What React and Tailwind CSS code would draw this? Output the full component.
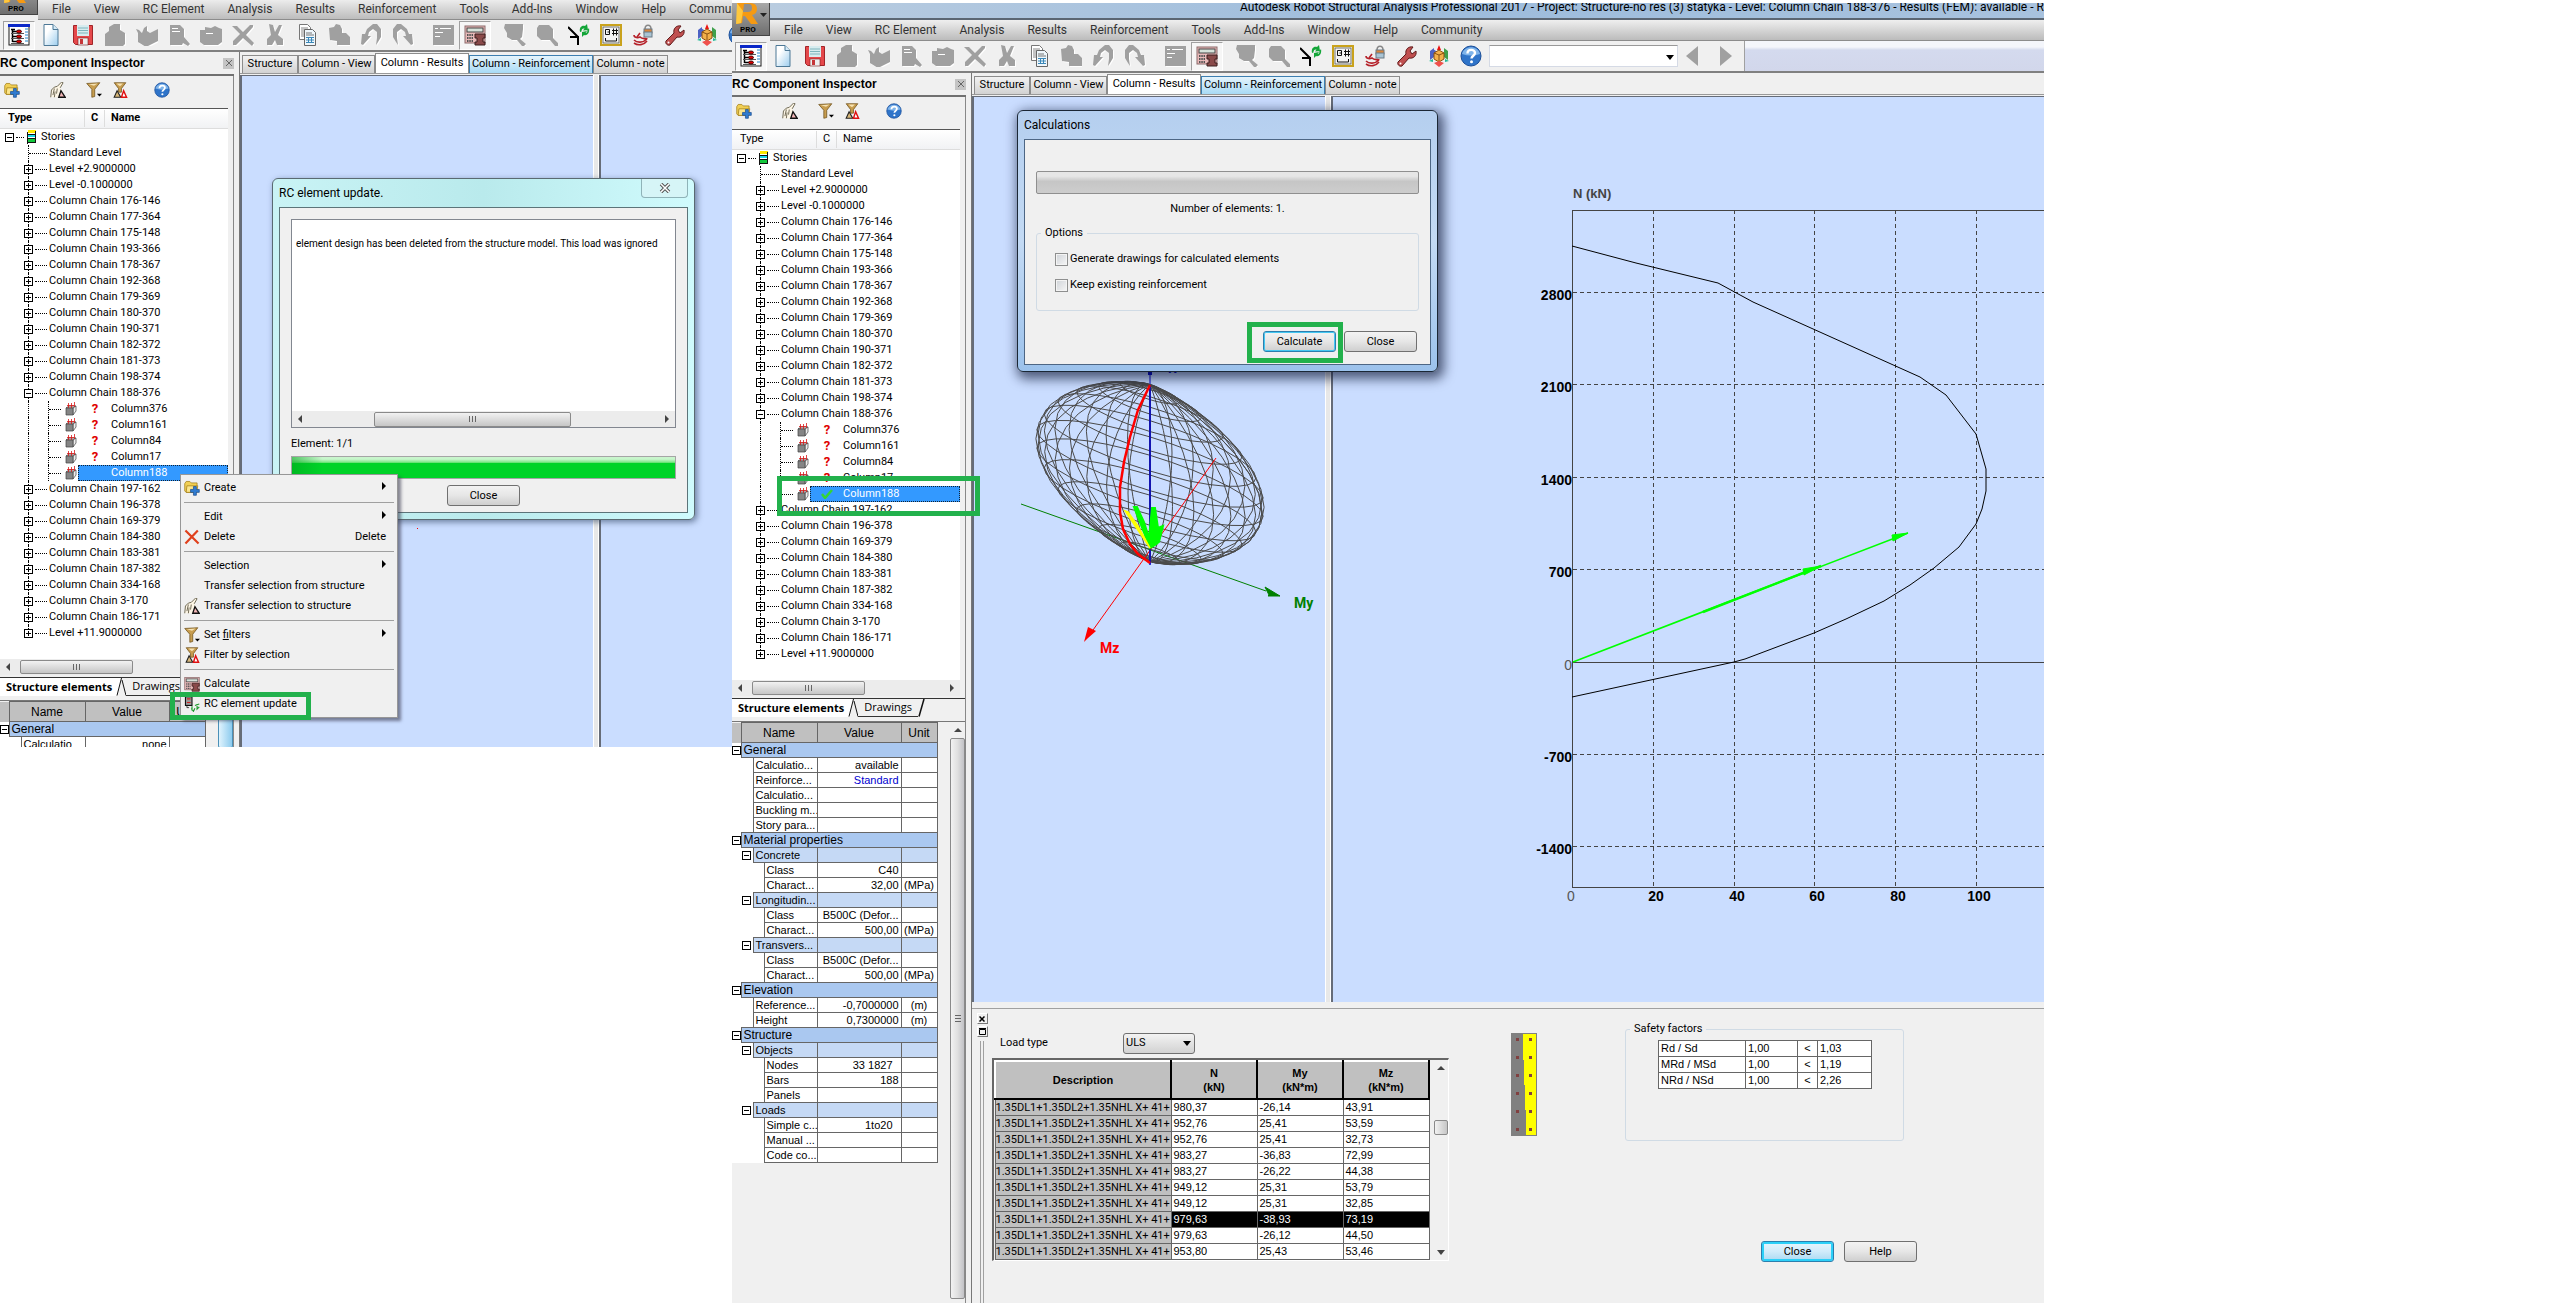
import { useState } from "react";

const MENU = ["File", "View", "RC Element", "Analysis", "Results", "Reinforcement", "Tools", "Add-Ins", "Window", "Help", "Community"];

const CHAINS_BEFORE = ["176-146", "177-364", "175-148", "193-366", "178-367", "192-368", "179-369", "180-370", "190-371", "182-372", "181-373", "198-374"];
const CHAINS_AFTER = ["197-162", "196-378", "169-379", "184-380", "183-381", "187-382", "334-168", "3-170", "186-171"];
const COLUMNS = ["Column376", "Column161", "Column84", "Column17", "Column188"];

const LOADS = [
  ["980,37", "-26,14", "43,91"],
  ["952,76", "25,41", "53,59"],
  ["952,76", "25,41", "32,73"],
  ["983,27", "-36,83", "72,99"],
  ["983,27", "-26,22", "44,38"],
  ["949,12", "25,31", "53,79"],
  ["949,12", "25,31", "32,85"],
  ["979,63", "-38,93", "73,19"],
  ["979,63", "-26,12", "44,50"],
  ["953,80", "25,43", "53,46"],
];

const FACTORS = [
  ["Rd / Sd", "1,00", "1,03"],
  ["MRd / MSd", "1,00", "1,19"],
  ["NRd / NSd", "1,00", "2,26"],
];

// level 0 = group, 1 = sub group, 2 = row under a group, 3 = row under a sub group
const PROPERTIES = [
  { level: 0, name: "General" },
  { level: 2, name: "Calculatio...", value: "available" },
  { level: 2, name: "Reinforce...", value: "Standard", link: true },
  { level: 2, name: "Calculatio..." },
  { level: 2, name: "Buckling m..." },
  { level: 2, name: "Story para..." },
  { level: 0, name: "Material properties" },
  { level: 1, name: "Concrete" },
  { level: 3, name: "Class", value: "C40" },
  { level: 3, name: "Charact...", value: "32,00", unit: "(MPa)" },
  { level: 1, name: "Longitudin..." },
  { level: 3, name: "Class", value: "B500C (Defor..." },
  { level: 3, name: "Charact...", value: "500,00", unit: "(MPa)" },
  { level: 1, name: "Transvers..." },
  { level: 3, name: "Class", value: "B500C (Defor..." },
  { level: 3, name: "Charact...", value: "500,00", unit: "(MPa)" },
  { level: 0, name: "Elevation" },
  { level: 2, name: "Reference...", value: "-0,7000000", unit: "(m)" },
  { level: 2, name: "Height", value: "0,7300000", unit: "(m)" },
  { level: 0, name: "Structure" },
  { level: 1, name: "Objects" },
  { level: 3, name: "Nodes", value: "33 1827", inset: true },
  { level: 3, name: "Bars", value: "188" },
  { level: 3, name: "Panels" },
  { level: 1, name: "Loads" },
  { level: 3, name: "Simple c...", value: "1to20", inset: true },
  { level: 3, name: "Manual ..." },
  { level: 3, name: "Code co..." },
];

const SHORT_PROPERTIES = [
  { level: 0, name: "General" },
  { level: 2, name: "Calculatio", value: "none" },
];

/* ---------- icons ---------- */

function Icon({ children, size = "size-[22px]" }) {
  return (
    <svg viewBox="0 0 22 22" className={size + " shrink-0"} aria-hidden="true">
      {children}
    </svg>
  );
}

function Grey({ d }) {
  return (
    <Icon>
      <path d={d} fill="#fff" transform="translate(1 1)" />
      <path d={d} fill="#a0a0a0" />
    </Icon>
  );
}

const inspectorIcon = (
  <Icon>
    <rect x="1" y="1" width="20" height="20" fill="#fff" stroke="#1a1a1a" strokeWidth="1" />
    <rect x="0" y="0" width="22" height="3" fill="#0a28c8" />
    <path d="M4.5 5v13M4.500 7.500h5M4.500 12.500h5M4.500 17.500h5M3 5.500h4" stroke="#000" strokeWidth="1.500" fill="none" />
    <path d="M3 9.500h13M3 14.500h13M3 19.500h13" stroke="#555" />
    <g fill="#e00000" stroke="#400">
      <ellipse cx="11" cy="7.500" rx="2.500" ry="1.500" />
      <ellipse cx="11" cy="12.500" rx="2.500" ry="1.500" />
      <ellipse cx="11" cy="17.500" rx="2.500" ry="1.500" />
    </g>
    <path d="M17 5h3M17 8h3M17 11h3M17 14h3M17 17h3" stroke="#28c" />
  </Icon>
);

const newIcon = (
  <Icon>
    <defs>
      <linearGradient id="page" x1="0" y1="0" x2="1" y2="1">
        <stop offset="0.3" stopColor="#fff" />
        <stop offset="1" stopColor="#9ccdee" />
      </linearGradient>
    </defs>
    <path d="M4 .5h9l5 5v16H4z" fill="url(#page)" stroke="#4d7896" />
    <path d="M13 .5v5h5" fill="#d5ebf8" stroke="#4d7896" />
  </Icon>
);

const saveIcon = (
  <Icon>
    <path d="M1.500 1.500h19v19h-17l-2-2z" fill="#e5484b" stroke="#a02528" />
    <rect x="5" y="1" width="12" height="11" fill="#d7ecef" />
    <path d="M6 4h10M6 6.500h10M6 9h10" stroke="#7fb5bd" />
    <rect x="6" y="14" width="10" height="7" fill="#eee" stroke="#7b1b1d" strokeWidth=".6" />
    <rect x="8" y="15" width="3" height="5" fill="#c63538" />
  </Icon>
);

const copyIcon = (
  <Icon>
    <path d="M3.500 .5h8l3 3v12h-11z" fill="#fff" stroke="#777" />
    <path d="M5 4h7M5 6h7M5 8h7M5 10h7M5 12h6" stroke="#888" />
    <path d="M8.500 5.500h8l3 3v13h-11z" fill="#eef6fb" stroke="#666" />
    <path d="M10 9h6M10 11h8" stroke="#777" />
    <path d="M10 13.500h8M10 16h8M10 18.500h8M12.500 13v6M15.500 13v6" stroke="#3a87b8" />
  </Icon>
);

function CalcIcon({ size }) {
  return (
    <Icon size={size}>
      <rect x="1" y="2" width="20" height="17" fill="#e9b9b9" stroke="#8a6a6a" />
      <rect x="3" y="4" width="16" height="4" fill="#d6e2da" stroke="#444" />
      <path d="M3 11h6M3 14h6M3 17h6" stroke="#555" strokeWidth="2" strokeDasharray="1.500 .8" />
      <path d="M11 10h10v4h-2v4h2v3H11v-3h2v-4h-2z" fill="#8a4a4a" stroke="#3c1f1f" />
    </Icon>
  );
}

const viewIcon = (
  <Icon>
    <path d="M0 3l10 10M10 13v8M2 13h9" stroke="#000" strokeWidth="2" fill="none" />
    <path d="M12 8c-1-5 2-7 5-6l2-2 1 6-5 .5 1.500-2c-2-.5-3 .8-3 3zM21 4c1 5-2 8-5 7l-2 2V8l5-1-1.500 2c1.500 0 2-1 2-3z" fill="#13a538" />
  </Icon>
);

const sectionIcon = (
  <Icon>
    <rect x="1" y="1" width="20" height="20" fill="#f4f2dc" stroke="#c9a21c" strokeWidth="2" />
    <rect x="3" y="3" width="16" height="16" fill="#f4f4f4" stroke="#555" strokeWidth=".8" />
    <path d="M5.500 5.500h4v5h-4zM7.500 8h2M12 6.500h6M12 9.500h6M13.500 4.500v7M16.500 4.500v7M5.500 14v3h11v-3" stroke="#111" strokeWidth="1" fill="none" />
  </Icon>
);

const lockIcon = (
  <Icon>
    <path d="M13 5c0-5 6-5 6 0v2h-6z" fill="none" stroke="#888" strokeWidth="1.500" />
    <rect x="12" y="5" width="8" height="4" fill="#d9853b" stroke="#6b7b85" />
    <rect x="12" y="8" width="8" height="5" fill="#a9c4d4" stroke="#6b7b85" />
    <path d="M2 11c0 3 4 3 6 2 2 2 7 2 7 1M2 16c3 3 9 3 13-1M2 19c4 3 10 2 13-2M8 9l-3 4" stroke="#b5222a" strokeWidth="1.600" fill="none" />
  </Icon>
);

const wrenchIcon = (
  <Icon>
    <path d="M2 17l8-8c-1-4 2-8 7-7l-3 4 2 3 4-3c1 5-3 8-7 7l-7 8c-3 1-5-2-4-4z" fill="#c05050" stroke="#5e1a1a" />
    <circle cx="4.500" cy="18.500" r="1" fill="#fff" />
  </Icon>
);

const cubeIcon = (
  <Icon>
    <path d="M2 6l4-3v9l-4 3zM5 4l3 2v3H5z" fill="#4d62c4" />
    <path d="M20 6l-4-3v9l4 3z" fill="#3fa04b" />
    <path d="M11 0l2 5H9z" fill="#e11" />
    <path d="M11 5l5 3v6l-5 3-5-3V8z" fill="#f3b04a" stroke="#8a5110" />
    <path d="M6 8l5 2 5-2M11 10v7" stroke="#8a5110" fill="none" />
    <path d="M6 18l5-2 5 2-5 4z" fill="#f0504c" />
    <path d="M1 16l4-2v3zM21 16l-4-2v3z" fill="#2b9" />
  </Icon>
);

function HelpIcon({ size }) {
  return (
    <Icon size={size}>
      <circle cx="11" cy="11" r="10" fill="#2f74c9" stroke="#1c4f99" />
      <path d="M2 9c2-9 16-9 18 0-6 2-12 2-18 0z" fill="#7fb4ea" />
      <path d="M7.500 8.500c0-5 7.500-4.500 7.500-.5 0 2.500-3.500 3-3.500 5.500" stroke="#fff" strokeWidth="2.400" fill="none" />
      <circle cx="11.500" cy="16.800" r="1.500" fill="#fff" />
    </Icon>
  );
}

const TOOLS = [
  { name: "Inspector", icon: inspectorIcon, pressed: true },
  { name: "New", icon: newIcon },
  { name: "Save", icon: saveIcon },
  { name: "Print", icon: <Grey d="M1 10l4-3V3l5-3h6v6l5 3v11l-2 2H1z" /> },
  { name: "Preview", icon: <Grey d="M0 5l3 1 3 3 2-5 3-2v5l3 2 8-4v12l-12 6-8-5V9z" /> },
  { name: "Print preview", icon: <Grey d="M2 1h10l4 4v8l6 7-2 2-5-3-1 2H2zM4 4v1h6V4zM4 7v1h8V7z" /> },
  { name: "Capture", icon: <Grey d="M0 6h5V3l6 1 4-2 4 2 3 1v13l-4 3H4l-4-3zM6 9v1h7V9z" /> },
  { name: "Delete", icon: <Grey d="M0 2h5l6 6 7-7h3v2l-7 8 8 8-2 3-9-8-7 7H1v-4l7-7z" /> },
  { name: "Cut", icon: <Grey d="M5 0l4 1 2 7 4-7h3l-4 10 5 4v6h-6l-2-5-3 5H3v-6l4-4z" /> },
  { name: "Copy", icon: copyIcon },
  { name: "Paste", icon: <Grey d="M1 4l5-1 2-3 4 1 2 4v4h4l4 4v8H9v-4l-7-1z" /> },
  { name: "Undo", icon: <Grey d="M1 20l1-10h3l2-5 6-5h4l4 5v8l-3 5-2 3 1-7V8l-4-3-4 3-1 4h3l-8 9z" /> },
  { name: "Redo", icon: <Grey d="M21 20l-1-10h-3l-2-5-6-5H5L1 5v8l3 5 2 3-1-7V8l4-3 4 3 1 4h-3l8 9z" /> },
  { name: "Table", gap: true, icon: <Grey d="M1 1h21v20H1zM3 4v1h3V4zM8 4v1h11V4zM3 8v1h8V8zM3 12v1h5v-1z" /> },
  { name: "Calculations", icon: <CalcIcon />, pressed: true },
  { name: "Zoom window", gap: true, icon: <Grey d="M1 0h18v5l-1 8-2 2 6 5-2 2h-2l-5-6H8l-5-3V9L0 4z" /> },
  { name: "Zoom", icon: <Grey d="M3 1h10l4 4v9l5 5v3h-3l-5-6H5l-4-4V4z" /> },
  { name: "Redraw", icon: viewIcon },
  { name: "Section", icon: sectionIcon },
  { name: "Lock", icon: lockIcon },
  { name: "Preferences", icon: wrenchIcon },
  { name: "3D", icon: cubeIcon },
  { name: "Help", icon: <HelpIcon /> },
];

const folderIcon = (
  <Icon size="size-4">
    <path d="M1 5l2-3h5l2 2h8v13H3L1 15z" fill="#f1cf54" stroke="#a07b12" />
    <path d="M4 8h15l-2 9H3z" fill="#fbe58c" stroke="#a07b12" />
    <path d="M13 9h4v4h4v4h-4v4h-4v-4H9v-4h4z" fill="#2f7bd0" stroke="#1b4f92" />
  </Icon>
);

const handIcon = (
  <Icon size="size-4">
    <path d="M1 21l1-10 4-4 4-1 6-6 2 1-4 7 3 5-3 8z" fill="#fdf6e6" />
    <path d="M1 21l1-10 4-4 4-1 6-6 2 1-4 7M6 9l-2 9M10 9l-1 7M7 13l-1 8" stroke="#6b6450" strokeWidth="1.300" fill="none" />
    <path d="M15 12l6 9h-9z" fill="#f3b6b6" stroke="#111" strokeWidth="1.800" />
  </Icon>
);

const filterIcon = (
  <Icon size="size-4">
    <path d="M1 2l18-1-7 9v10l-4 1V10z" fill="#c79d4f" stroke="#6b4d16" />
    <path d="M4 3l12-1-5 3z" fill="#f6e3b4" />
    <path d="M15 16h7l-3.500 4z" fill="#000" />
  </Icon>
);

const filterSelectionIcon = (
  <Icon size="size-4">
    <path d="M3 1h16l-6 8v5H9V9z" fill="#c79d4f" stroke="#6b4d16" />
    <path d="M6 2h9l-4 4z" fill="#f6e3b4" />
    <path d="M7 12l5 9H3z" fill="#d9b97a" stroke="#222" strokeWidth="1.500" />
    <path d="M16 12l4 9h-7z" fill="#fff" stroke="#e01010" strokeWidth="2" />
  </Icon>
);

const deleteIcon = (
  <Icon size="size-4">
    <path d="M2 2l18 18M19 2L2 20" stroke="#e0401c" strokeWidth="3" />
  </Icon>
);

const updateIcon = (
  <Icon size="size-4">
    <rect x="2" y="1" width="9" height="12" fill="#999" stroke="#111" strokeWidth="1.500" />
    <path d="M4 4h5M4 9h5" stroke="#c22" strokeWidth="1.500" />
    <path d="M4 13v3h3" stroke="#111" fill="none" />
    <path d="M10 17l3 4 2-4M11 20v-6M21 11l-6 2M18 11v7l3-3" stroke="#1b9a2c" strokeWidth="1.600" fill="none" />
  </Icon>
);

const storiesIcon = (
  <svg viewBox="0 0 11 14" className="h-3.5 w-[11px] shrink-0" aria-hidden="true">
    <path d="M2 0h8v3H2z" fill="#ffe800" />
    <path d="M1 4h8v3H1z" fill="#18d8e8" />
    <path d="M1 9h8v3H1z" fill="#12c83c" />
    <path d="M1.500 2v12M9.500 1v12M1 4.500h9M1 8.500h9M1 12.500h9" stroke="#111" fill="none" />
  </svg>
);

const memberIcon = (
  <svg viewBox="0 0 12 14" className="h-3.5 w-3 shrink-0" aria-hidden="true">
    <path d="M1 6l3-2h7L8 6z" fill="#ddd" stroke="#444" strokeWidth=".7" />
    <path d="M8 6l3-2v5l-3 4z" fill="#eee" stroke="#444" strokeWidth=".7" />
    <path d="M1 6h7v7H1z" fill="#858585" stroke="#444" strokeWidth=".7" />
    <path d="M3.500 1v5M6.500 1v5M9.500 0v5M2 3.500h7" stroke="#d81818" strokeWidth=".8" fill="none" />
  </svg>
);

function Triangle({ dir = "down", className = "fill-black" }) {
  const points = { down: "0,2 8,2 4,7", up: "0,6 8,6 4,2", left: "6,0 6,8 2,4", right: "2,0 2,8 6,4" };
  return (
    <svg viewBox="0 0 8 8" className={"size-2 shrink-0 " + className} aria-hidden="true">
      <polygon points={points[dir]} />
    </svg>
  );
}

function Expander({ open, label }) {
  return (
    <button aria-label={(open ? "Collapse " : "Expand ") + label} className="flex size-[9px] shrink-0 items-center justify-center border border-black bg-white">
      <svg viewBox="0 0 5 5" className="size-[5px]">
        <path d={open ? "M0 2.500h5" : "M0 2.500h5M2.500 0v5"} stroke="#000" />
      </svg>
    </button>
  );
}

function WinButton({ children, tone = "plain", className = "" }) {
  const tones = {
    plain: "border-[#707070] bg-linear-to-b from-[#f3f3f3] via-[#e6e6e6] to-[#cfcfcf]",
    focus: "border-[#2c7fae] bg-linear-to-b from-[#f3f3f3] via-[#e6e6e6] to-[#cfcfcf] shadow-[inset_0_0_0_1px_#45c8f2]",
    hot: "border-[#2c7fae] bg-linear-to-b from-[#e8f5fc] via-[#d0ebfa] to-[#a9d9f2] shadow-[inset_0_0_0_2px_#2cd0f8]",
  };
  return <button className={"h-[21px] w-[73px] rounded-[3px] border text-center leading-4 " + tones[tone] + " " + className}>{children}</button>;
}

/* ---------- window chrome ---------- */

function TitleAndMenu() {
  return (
    <header className="flex shrink-0 font-[Roboto,sans-serif] text-xs">
      <div className="relative z-10 -mb-px h-[33px] w-[38px] shrink-0 overflow-hidden border-r border-b border-[#444] bg-linear-to-b from-[#a9a9a9] to-[#6f6f6f]">
        <svg viewBox="0 0 38 22" className="block h-[22px] w-[38px]" aria-hidden="true">
          <path d="M5 0h13q7 0 7 6 0 5-5 6l6 9h-7l-6-8h-2l-1 7-5 1z" fill="#f59a13" />
          <path d="M12 1h5q3 0 3 4 0 4-4 4h-5z" fill="#8f8f8f" />
          <path d="M5 0l-1 21 5-1 2-12z" fill="#ffc83d" />
          <path d="M28 10h7l-3.500 4z" fill="#222" />
        </svg>
        <span className="absolute bottom-0 left-2 text-[8px] leading-[10px] font-bold text-black">PRO</span>
      </div>
      <div className="min-w-0 flex-1">
        <div className="h-[17px] overflow-hidden border-b-2 border-[#5b6673] bg-linear-to-r from-[#b9cce0] via-[#9dbcdc] to-[#a8c2de] pl-[470px] leading-[9px] whitespace-nowrap">
          Autodesk Robot Structural Analysis Professional 2017 - Project: Structure-no res (3) statyka - Level: Column Chain 188-376 - Results (FEM): available - Re
        </div>
        <nav className="flex h-[21px] items-center gap-[23px] border-b border-[#8c8c8c] bg-linear-to-b from-[#efefef] to-[#bcbcbc] pl-3.5 text-[#333]">
          {MENU.map((item) => (
            <button key={item} className="shrink-0">{item}</button>
          ))}
        </nav>
      </div>
    </header>
  );
}

function Toolbar() {
  return (
    <div className="flex h-8 shrink-0 items-center overflow-hidden border-b-2 border-[#808080] bg-[#f0f0f0] pl-[3px]">
      {TOOLS.map((tool) => (
        <button
          key={tool.name}
          aria-label={tool.name}
          className={
            "flex h-[29px] w-8 shrink-0 items-center justify-center " +
            (tool.gap ? "ml-2 " : "") +
            (tool.pressed ? "border border-[#a0a0a0] border-r-white border-b-white bg-[#f6f6f6]" : "")
          }
        >
          {tool.icon}
        </button>
      ))}
      <div className="relative ml-0.5 shrink-0">
        <select aria-label="Search" className="block h-[22px] w-[189px] appearance-none border border-[#d5dae5] border-t-[#999] bg-white">
          <option></option>
        </select>
        <span className="pointer-events-none absolute top-2 right-1">
          <Triangle />
        </span>
      </div>
      <button aria-label="Previous" className="ml-2 shrink-0">
        <svg viewBox="0 0 12 20" className="h-5 w-3"><path d="M12 0v20L0 10z" fill="#a0a0a0" /></svg>
      </button>
      <button aria-label="Next" className="ml-[22px] shrink-0">
        <svg viewBox="0 0 12 20" className="h-5 w-3"><path d="M0 0v20l12-10z" fill="#a0a0a0" /></svg>
      </button>
      <div className="ml-3 h-full flex-1 border-l border-[#a0a0a0] bg-linear-to-b from-[#f4f6fb] from-20% via-[#d4daee] via-30% to-[#d2d7eb]" />
    </div>
  );
}

function TreeRow({ children, last }) {
  return (
    <li className="flex h-4 items-center whitespace-nowrap">
      <span className={"w-[29px] shrink-0 border-r border-dotted border-black " + (last ? "h-2 self-start" : "h-4")} />
      {children}
    </li>
  );
}

function Branch({ name, open, last }) {
  return (
    <TreeRow last={last}>
      <span className="-ml-[5px] flex items-center">
        <Expander open={open} label={name} />
        <span className="mr-0.5 ml-0.5 w-3 border-t border-dotted border-black" />
        {name}
      </span>
    </TreeRow>
  );
}

function Leaf({ name, selected, done }) {
  return (
    <TreeRow>
      <span className="ml-[19px] h-4 shrink-0 border-l border-dotted border-black" />
      <span className="w-3 shrink-0 border-t border-dotted border-black" />
      <span className="ml-1">{memberIcon}</span>
      <span className={"ml-px flex h-4 flex-1 items-center " + (selected ? "border border-dotted border-[#123] bg-[#3399ff] text-white" : "border border-transparent")}>
        <span className="flex w-8 justify-center text-[13px] font-bold text-[#e00000]">
          {done ? (
            <svg viewBox="0 0 12 10" className="h-2.5 w-3"><path d="M1 5l3 4 7-8" stroke="#35d435" strokeWidth="2.500" fill="none" /></svg>
          ) : selected ? null : (
            "?"
          )}
        </span>
        {name}
      </span>
    </TreeRow>
  );
}

function HScroll({ thumb }) {
  return (
    <div className="flex h-4 items-center bg-[#ececec] px-1">
      <Triangle dir="left" className="fill-[#444]" />
      {thumb}
      <span className="flex-1" />
      <Triangle dir="right" className="fill-[#444]" />
    </div>
  );
}

function Grip() {
  return (
    <svg viewBox="0 0 8 6" className="h-1.5 w-2" aria-hidden="true">
      <path d="M.5 0v6M3.500 0v6M6.500 0v6" stroke="#666" />
    </svg>
  );
}

function PropertyRow({ row }) {
  if (row.level === 0) {
    return (
      <tr className="h-[15px]">
        <td className="bg-white"><Expander open label={row.name} /></td>
        <td colSpan={5} className="border border-[#666] bg-[#aac8f0] pl-0.5 text-xs leading-[14px]">{row.name}</td>
      </tr>
    );
  }
  const sub = row.level === 1;
  const tone = sub ? "bg-[#c5d9f5]" : "bg-white";
  return (
    <tr className="h-[15px]">
      <td colSpan={row.level === 3 ? 3 : 2} className="bg-white pl-2.5">{sub && <Expander open label={row.name} />}</td>
      <td colSpan={row.level === 3 ? 1 : 2} className={"overflow-hidden border border-[#666] pl-0.5 " + tone}>{row.name}</td>
      <td className={"border border-[#666] text-right " + tone + (row.inset ? " pr-2" : " pr-0.5") + (row.link ? " text-[#0000d0]" : "")}>{row.value}</td>
      <td className={"border border-[#666] text-center " + tone}>{row.unit}</td>
    </tr>
  );
}

function Inspector({ bold, done, rows, hot }) {
  return (
    <aside className="flex w-[239px] shrink-0 flex-col bg-[#f0f0f0]">
      <div className="flex h-6 w-[234px] shrink-0 items-center justify-between border-b-2 border-[#707070]">
        <h2 className="font-['Liberation_Sans',sans-serif] text-xs font-bold">RC Component Inspector</h2>
        <button aria-label="Close inspector" className="flex size-[11px] items-center justify-center bg-[#c4c4c4] text-[#666]">
          <svg viewBox="0 0 8 8" className="size-2"><path d="M1 1l6 6M7 1l-6 6" stroke="currentColor" /></svg>
        </button>
      </div>
      <div className="flex w-[234px] flex-1 flex-col border-r border-[#888]">
        <div className="flex h-8 shrink-0 items-center pb-1 pl-1">
          <button aria-label="New folder">{folderIcon}</button>
          <button aria-label="Transfer selection" className="ml-[30px]">{handIcon}</button>
          <button aria-label="Set filters" className="ml-5">{filterIcon}</button>
          <button aria-label="Filter by selection" className="ml-2.5">{filterSelectionIcon}</button>
          <button aria-label="Help" className="ml-[26px]"><HelpIcon size="size-4" /></button>
        </div>
        <div className="mr-[5px] shrink-0 border-t border-[#555] bg-white">
          <div className={"flex h-5 items-center border-b border-[#ddd] bg-linear-to-b from-white to-[#f1f2f4] " + (bold ? "font-bold" : "")}>
            <span className="w-[85px] border-r border-[#ddd] pl-2">Type</span>
            <span className="w-5 border-r border-[#ddd] text-center">C</span>
            <span className="pl-1.5">Name</span>
          </div>
          <ul className="h-[530px]">
            <li className="flex h-4 items-center pl-[5px]">
              <Expander open label="Stories" />
              <span className="mx-0.5 w-2 border-t border-dotted border-black" />
              {storiesIcon}
              <span className="ml-1">Stories</span>
            </li>
            <TreeRow>
              <span className="mr-0.5 w-[18px] border-t border-dotted border-black" />
              Standard Level
            </TreeRow>
            <Branch name="Level +2.9000000" />
            <Branch name="Level -0.1000000" />
            {CHAINS_BEFORE.map((id) => (
              <Branch key={id} name={"Column Chain " + id} />
            ))}
            <Branch name="Column Chain 188-376" open />
            {COLUMNS.map((name) => (
              <Leaf key={name} name={name} selected={name === "Column188"} done={done && name === "Column188"} />
            ))}
            {CHAINS_AFTER.map((id) => (
              <Branch key={id} name={"Column Chain " + id} />
            ))}
            <Branch name="Level +11.9000000" last />
          </ul>
          <HScroll
            thumb={
              <span className="ml-2 flex h-3.5 w-[113px] items-center justify-center rounded-xs border border-[#8a8a8a] bg-linear-to-b from-[#f2f2f2] to-[#c6c6c6]">
                <Grip />
              </span>
            }
          />
        </div>
        <div role="tablist" className="mt-0.5 flex h-[23px] shrink-0 border-t border-[#333] font-['Open_Sans',sans-serif]">
          <button role="tab" aria-selected="true" className="h-[18px] bg-white pr-1 pl-1.5 font-bold">Structure elements</button>
          <svg viewBox="0 0 10 18" className="h-[18px] w-2.5" aria-hidden="true">
            <path d="M0 0h6L2 17H0z" fill="#fff" />
            <path d="M5.500 0L1 17.500M6 2l4 15.500" stroke="#111" fill="none" />
          </svg>
          <button role="tab" aria-selected="false" className="h-[18px] border-b border-[#333] px-1.5">Drawings</button>
          <svg viewBox="0 0 10 18" className="h-[18px] w-2.5" aria-hidden="true">
            <path d="M6 0L1 17.500" stroke="#111" strokeWidth="1.500" />
          </svg>
        </div>
        <div className="flex flex-1 justify-between border-t border-[#777] font-['Liberation_Sans',sans-serif]">
          <div>
            <table className="w-[205px] table-fixed border-collapse leading-[14px] whitespace-nowrap">
              <colgroup>
                <col className="w-[9px]" />
                <col className="w-3" />
                <col className="w-[11px]" />
                <col className="w-[53px]" />
                <col className="w-[84px]" />
                <col className="w-9" />
              </colgroup>
              <thead>
                <tr className="h-5 bg-[#c0c0c0] text-xs">
                  <th />
                  <th colSpan={3} className="border border-[#666] font-normal">Name</th>
                  <th className="border border-[#666] font-normal">Value</th>
                  <th className="border border-[#666] font-normal">Unit</th>
                </tr>
              </thead>
              <tbody>
                {rows.map((row, i) => (
                  <PropertyRow key={i} row={row} />
                ))}
              </tbody>
            </table>
          </div>
          <div className="flex w-[15px] flex-col items-center">
            <span className="flex h-4 items-center"><Triangle dir="up" className="fill-[#444]" /></span>
            <span
              className={
                "mb-1 flex w-full flex-1 items-center justify-center rounded-xs border " +
                (hot ? "border-[#4a90b8] bg-linear-to-r from-[#dff3fd] to-[#8ccbee]" : "border-[#8a8a8a] bg-linear-to-r from-[#f2f2f2] via-[#e0e0e0] to-[#c2c2c6]")
              }
            >
              {!hot && <span className="rotate-90"><Grip /></span>}
            </span>
          </div>
        </div>
      </div>
    </aside>
  );
}

function ViewTabs() {
  const plain = "h-[18px] shrink-0 border border-b-0 border-[#8c8c8c] bg-linear-to-b from-[#f2f2f2] to-[#d2d2d2] ";
  return (
    <div role="tablist" className="flex h-[22px] shrink-0 items-end border-b border-[#999] bg-[#f0f0f0] pl-0.5 whitespace-nowrap">
      <button role="tab" className={plain + "w-14"}>Structure</button>
      <button role="tab" className={plain + "w-[77px]"}>Column - View</button>
      <button role="tab" aria-selected="true" className="h-5 w-[94px] shrink-0 border border-b-0 border-[#8c8c8c] bg-white">Column - Results</button>
      <button role="tab" className="h-[18px] w-[124px] shrink-0 border border-b-0 border-[#3c7fb1] bg-linear-to-b from-[#e5f4fc] to-[#a8daf5]">Column - Reinforcement</button>
      <button role="tab" className={plain + "w-[75px]"}>Column - note</button>
    </div>
  );
}

function RobotWindow({ inspector, surface, diagram, children }) {
  return (
    <div className="flex h-full flex-col bg-[#f0f0f0]">
      <TitleAndMenu />
      <Toolbar />
      <div className="flex min-h-0 flex-1">
        {inspector}
        <div className="flex min-w-0 flex-1 flex-col border-l border-[#777]">
          <ViewTabs />
          <div className="mt-px flex flex-1 overflow-hidden bg-[#caddff]">
            <div className="w-[353px] shrink-0 border-t border-l-2 border-[#666c78]">{surface}</div>
            <div className="w-1.5 shrink-0 border-x border-white bg-[#e8e8e8]" />
            <div className="min-w-0 flex-1 overflow-hidden border-t border-l-2 border-[#666c78]">{diagram}</div>
          </div>
          {children}
        </div>
      </div>
    </div>
  );
}

/* ---------- drawings ---------- */

const MERIDIANS = 32;
const PARALLELS = 15;

// the radius tapers to a point at both poles
function meshPoint(phi, t) {
  const r = Math.pow(Math.sin(t), 1.5);
  const x = 174 + r * (112 * Math.cos(phi) - 22 * Math.sin(phi));
  const y = 376 - 88 * Math.cos(t) + r * (39 * Math.cos(phi) + 20 * Math.sin(phi));
  return x.toFixed(1) + "," + y.toFixed(1);
}

function range(n) {
  return Array.from({ length: n + 1 }, (_, i) => i / n);
}

function Surface() {
  return (
    <svg viewBox="-2 0 350 580" className="block h-[580px] w-[350px]" role="img" aria-label="N-My-Mz surface">
      <path d="M174 270v197" stroke="#0000c8" />
      <rect x="172" y="270" width="4" height="8" fill="#0000c8" />
      <text x="192" y="276" className="fill-[#0000c8] text-[13px] font-bold">N</text>
      <path d="M45 407l245 87" stroke="#008000" />
      <g fill="none" stroke="#4a4a4a">
        {range(MERIDIANS).map((m) => (
          <polyline key={m} points={range(16).map((t) => meshPoint(m * 2 * Math.PI, t * 3.14159)).join(" ")} />
        ))}
        {range(PARALLELS).slice(1, -1).map((t) => (
          <polyline key={t} points={range(32).map((m) => meshPoint(m * 2 * Math.PI, t * 3.14159)).join(" ")} />
        ))}
      </g>
      <path d="M240 361L112 540" stroke="#f00" />
      <path d="M174 288v180" stroke="#0000c8" strokeWidth="1.500" />
      <path d="M174 288L162 313 154 340 148 365 144 390 144 415 147 432 154 447 162 457 174 466" stroke="#f00" strokeWidth="2.500" fill="none" />
      <path d="M174 451L158 410l3 0 7 15 5 16 3-30 3 0 3 20 5-2-4 16-4 3z" fill="#0f0" stroke="#0f0" strokeWidth="2" />
      <path d="M174 451L149 414l3 1 10 14z" fill="#ff0" stroke="#ff0" strokeWidth="1.500" />
      <path d="M304 499l-15-9 4 8-1 1z" fill="#008000" stroke="#008000" />
      <path d="M108 545l4-15 8 4-8 7z" fill="#f00" />
      <text x="318" y="511" className="fill-[#008000] text-[14px] font-bold">My</text>
      <text x="124" y="556" className="fill-[#f00] text-[14px] font-bold">Mz</text>
    </svg>
  );
}

const ROWS = [
  [195, "2800"],
  [287, "2100"],
  [380, "1400"],
  [472, "700"],
  [657, "-700"],
  [749, "-1400"],
];
const COLS = [
  [320, "20"],
  [401, "40"],
  [481, "60"],
  [562, "80"],
  [643, "100"],
];

function Diagram() {
  return (
    <svg viewBox="0 0 711 820" className="block h-[820px] w-[711px]" role="img" aria-label="N diagram">
      <g shapeRendering="crispEdges" stroke="#444" fill="none">
        {ROWS.map(([y]) => (
          <path key={y} d={`M240 ${y}.5h471`} strokeDasharray="4 3" />
        ))}
        {COLS.map(([x]) => (
          <path key={x} d={`M${x}.5 113v677`} strokeDasharray="4 3" />
        ))}
        <path d="M711 113.500H239.500v676.500H711M239 565.500h472" />
      </g>
      <path
        d="M239 149L303 166 385 186 420 205 587 280 613 298 643 337 649 358 653 372 653 394 649 412 643 427 626 450 601 471 577 488 551 504 513 522 481 536 412 562 401 565 239 600"
        stroke="#000"
        fill="none"
      />
      <path d="M240 565L575 436M240 565L480 472" stroke="#0f0" strokeWidth="1.500" />
      <path d="M370 515L488 469" stroke="#0f0" strokeWidth="2.500" />
      <path d="M559 438l16-2-15 8zM470 472l18-3-17 9z" fill="#0f0" stroke="#0f0" />
      <g className="font-['Liberation_Sans',sans-serif] text-[14px] font-bold">
        {ROWS.map(([y, label]) => (
          <text key={label} x="239" y={y + 8} textAnchor="end">{label}</text>
        ))}
        {COLS.map(([x, label]) => (
          <text key={label} x={x + 3} y="804" textAnchor="middle">{label}</text>
        ))}
        <text x="239" y="573" textAnchor="end" fill="#555" className="font-normal">0</text>
        <text x="234" y="804" fill="#555" className="font-normal">0</text>
        <text x="240" y="101" fill="#444" className="text-[13px]">N (kN)</text>
      </g>
    </svg>
  );
}

function CrossSection() {
  return (
    <svg viewBox="0 0 26 103" className="h-[103px] w-[26px] shrink-0" role="img" aria-label="Cross section">
      <rect width="26" height="103" fill="#808080" />
      <path d="M12 1h13v101H15V77h-1V52h-1V27h-1z" fill="#ff0" />
      {[6, 24, 42, 60, 78, 96].map((y) => (
        <g key={y} fill="#804040">
          <rect x="5" y={y - 1} width="3" height="3" />
          <rect x="18" y={y - 1} width="3" height="3" />
        </g>
      ))}
    </svg>
  );
}

/* ---------- results panel ---------- */

function ResultsPanel() {
  const [loadType, setLoadType] = useState("ULS");
  const head = "border-r-2 border-b-2 border-black border-t-2 border-l-2 border-t-white border-l-white bg-[#c0c0c0] leading-3.5";
  return (
    <section className="mt-[6px] flex shrink-0 border-t border-[#a0a0a0] pb-[41px]">
      <div className="-mb-[41px] flex w-5 flex-col items-center pt-1">
        <button aria-label="Close panel" className="flex size-[11px] items-center justify-center border border-white border-r-[#777] border-b-[#777]">
          <svg viewBox="0 0 6 6" className="size-1.5"><path d="M.5.5l5 5M5.500.5l-5 5" stroke="#000" strokeWidth="1.500" /></svg>
        </button>
        <button aria-label="Maximize panel" className="mt-0.5 flex size-[11px] items-center justify-center border border-white border-r-[#777] border-b-[#777]">
          <svg viewBox="0 0 7 7" className="size-[7px]"><path d="M.5 1.500h6v5h-6zM0 .5h7" fill="none" stroke="#000" /></svg>
        </button>
        <span className="mt-1 w-1 flex-1 border-x border-[#a0a0a0]" />
      </div>
      <div className="w-[457px] shrink-0 pt-6">
        <div className="flex items-center pl-2">
          <label htmlFor="load-type" className="w-[123px]">Load type</label>
          <div className="relative">
            <select
              id="load-type"
              value={loadType}
              onChange={(e) => setLoadType(e.target.value)}
              className="block h-[21px] w-[72px] appearance-none rounded-[3px] border border-[#707070] bg-linear-to-b from-[#f3f3f3] to-[#d2d2d2] pl-0.5"
            >
              <option>ULS</option>
              <option>SLS</option>
            </select>
            <span className="pointer-events-none absolute top-1.5 right-1"><Triangle /></span>
          </div>
        </div>
        <div className="mt-1 flex justify-between border-t-2 border-r border-b border-l-2 border-[#666] border-r-white border-b-white font-['Liberation_Sans',sans-serif]">
          <table className="w-[434px] table-fixed border-collapse whitespace-nowrap">
            <colgroup>
              <col className="w-44" />
              <col className="w-[86px]" />
              <col className="w-[86px]" />
              <col className="w-[86px]" />
            </colgroup>
            <thead>
              <tr className="h-[38px] text-[11px]">
                <th className={head}>Description</th>
                <th className={head}>N<br />(kN)</th>
                <th className={head}>My<br />(kN*m)</th>
                <th className={head}>Mz<br />(kN*m)</th>
              </tr>
            </thead>
            <tbody>
              {LOADS.map((load, i) => (
                <tr key={i} className={"h-4 leading-[15px] " + (i === 7 ? "bg-black text-white" : "bg-white")}>
                  <th className="overflow-hidden border border-[#666] bg-[#c0c0c0] text-left font-[Roboto,sans-serif] font-normal text-black">1.35DL1+1.35DL2+1.35NHL X+ 41+</th>
                  {load.map((value, j) => (
                    <td key={j} className="border border-[#666] pl-0.5">{value}</td>
                  ))}
                </tr>
              ))}
            </tbody>
          </table>
          <div className="flex w-[15px] flex-col items-center">
            <span className="flex h-4 items-center"><Triangle dir="up" className="fill-[#444]" /></span>
            <span className="mt-11 h-[15px] w-3.5 rounded-xs border border-[#8a8a8a] bg-linear-to-r from-[#f2f2f2] to-[#c6c6c6]" />
            <span className="flex-1" />
            <span className="flex h-4 items-center"><Triangle className="fill-[#444]" /></span>
          </div>
        </div>
      </div>
      <div className="ml-[62px] pt-6">
        <CrossSection />
      </div>
      <div className="ml-[88px] w-[292px] pt-3">
        <fieldset className="h-[120px] w-[279px] rounded-[3px] border border-[#d0dbe5] pl-8">
          <legend className="-ml-7 px-1 leading-4">Safety factors</legend>
          <table className="mt-[3px] w-[213px] table-fixed border-collapse bg-white font-['Liberation_Sans',sans-serif] leading-[15px]">
            <colgroup>
              <col className="w-[87px]" />
              <col className="w-[52px]" />
              <col className="w-5" />
              <col className="w-[54px]" />
            </colgroup>
            <tbody>
              {FACTORS.map(([name, limit, value]) => (
                <tr key={name} className="h-4">
                  <th className="border border-[#666] pl-0.5 text-left font-normal">{name}</th>
                  <td className="border border-[#666] pl-0.5">{limit}</td>
                  <td className="border border-[#666] text-center">&lt;</td>
                  <td className="border border-[#666] pl-0.5">{value}</td>
                </tr>
              ))}
            </tbody>
          </table>
        </fieldset>
        <div className="mt-[100px] flex justify-end gap-2.5">
          <WinButton tone="hot">Close</WinButton>
          <WinButton>Help</WinButton>
        </div>
      </div>
    </section>
  );
}

/* ---------- dialogs and menu ---------- */

function UpdateDialog() {
  return (
    <div role="dialog" aria-label="RC element update" className="absolute top-[178px] left-[272px] w-[423px] rounded-md border border-[#5a6a72] bg-linear-to-r from-[#c9f3f5] via-[#b9eaec] to-[#d0fbfd] px-1.5 pb-1.5 shadow-[2px_2px_6px_rgba(40,60,90,0.6)]">
      <div className="flex h-7 justify-between font-[Roboto,sans-serif] text-xs">
        <span className="leading-7">RC element update.</span>
        <button aria-label="Close dialog" className="flex h-[19px] w-[47px] items-center justify-center rounded-b-[4px] border border-t-0 border-[#8fb3b8] bg-[#d6f5f7]">
          <svg viewBox="0 0 12 10" className="h-2.5 w-3"><path d="M2 1l8 8M10 1l-8 8" stroke="#555" strokeWidth="3.500" /><path d="M2 1l8 8M10 1l-8 8" stroke="#fff" strokeWidth="1.500" /></svg>
        </button>
      </div>
      <div className="border border-[#5c7479] bg-[#f0f0f0] px-[11px] pt-[11px] pb-1.5">
        <div className="flex h-[209px] flex-col border border-[#828790] bg-white">
          <p className="flex-1 overflow-hidden pt-4 pl-1 text-[10px] leading-4 whitespace-nowrap">element design has been deleted from the structure model. This load was ignored</p>
          <HScroll
            thumb={
              <span className="ml-[70px] flex h-[15px] w-[197px] items-center justify-center rounded-xs border border-[#8a8a8a] bg-linear-to-b from-[#f2f2f2] to-[#c6c6c6]">
                <Grip />
              </span>
            }
          />
        </div>
        <p className="mt-2 leading-4">Element: 1/1</p>
        <div role="progressbar" aria-valuenow={100} aria-label="Update progress" className="mt-1 h-[23px] border border-[#a5a5a5] bg-linear-to-b from-[#c8f5cc] from-10% via-[#7ee88a] via-25% to-[#00d328] to-30%">
          <div className="h-full bg-linear-to-r from-[#00a81e]/60 via-transparent via-8% to-transparent" />
        </div>
        <div className="mt-1.5 flex justify-center">
          <WinButton>Close</WinButton>
        </div>
      </div>
    </div>
  );
}

const CONTEXT = [
  [{ name: "Create", icon: folderIcon, sub: true }],
  [{ name: "Edit", sub: true }, { name: "Delete", icon: deleteIcon, key: "Delete" }],
  [{ name: "Selection", sub: true }, { name: "Transfer selection from structure" }, { name: "Transfer selection to structure", icon: handIcon }],
  [{ name: <>Set <u>f</u>ilters</>, icon: filterIcon, sub: true }, { name: "Filter by selection", icon: filterSelectionIcon }],
  [{ name: "Calculate", icon: <CalcIcon size="size-4" /> }, { name: "RC element update", icon: updateIcon }],
];

function ContextMenu() {
  return (
    <div role="menu" className="absolute top-[474px] left-[180px] w-[218px] border border-[#979797] bg-[#f0f0f0] px-[3px] py-[3px] shadow-[3px_3px_3px_rgba(60,60,80,0.6)]">
      {CONTEXT.map((group, g) => (
        <div key={g} className={g > 0 ? "mt-1 border-t border-[#a0a0a0] pt-1" : ""}>
          {group.map((item, i) => (
            <button key={i} role="menuitem" className="flex h-5 w-full items-center text-left">
              <span className="w-5">{item.icon}</span>
              <span className="flex-1">{item.name}</span>
              {item.key && <span className="pr-2">{item.key}</span>}
              {item.sub && <span className="pr-1.5 pb-1"><Triangle dir="right" /></span>}
            </button>
          ))}
        </div>
      ))}
    </div>
  );
}

function CalculationsDialog() {
  return (
    <div role="dialog" aria-label="Calculations" className="absolute top-[110px] left-[285px] w-[421px] rounded-md border border-[#1b2735] bg-linear-to-b from-[#b5cfef] via-[#c3daf4] to-[#9cc2ec] px-1.5 pb-1.5 shadow-[3px_4px_12px_3px_rgba(10,20,50,0.65)]">
      <div className="h-7 font-[Roboto,sans-serif] text-xs leading-7">Calculations</div>
      <div className="border border-[#4d6684] bg-[#f0f0f0] px-[11px] pt-[31px] pb-3">
        <div role="progressbar" aria-valuenow={0} aria-label="Calculation progress" className="h-[23px] rounded-xs border border-[#8f8f8f] bg-linear-to-b from-[#e6e6e6] from-20% via-[#c6c6c6] via-45% to-[#cdcdcd]" />
        <p className="mt-[7px] text-center leading-4">Number of elements: 1.</p>
        <fieldset className="mt-2 h-[86px] rounded-[3px] border border-[#d0dbe5] px-[18px]">
          <legend className="-ml-[14px] px-1 leading-4">Options</legend>
          <label className="mt-2.5 flex items-center gap-0.5 leading-4">
            <input type="checkbox" className="size-[13px] appearance-none border border-[#8e8f8f] bg-linear-to-br from-[#cfd3d8] to-[#f6f6f6] shadow-[inset_0_0_0_1px_#f4f4f4]" />
            Generate drawings for calculated elements
          </label>
          <label className="mt-2.5 flex items-center gap-0.5 leading-4">
            <input type="checkbox" className="size-[13px] appearance-none border border-[#8e8f8f] bg-linear-to-br from-[#cfd3d8] to-[#f6f6f6] shadow-[inset_0_0_0_1px_#f4f4f4]" />
            Keep existing reinforcement
          </label>
        </fieldset>
        <div className="mt-5 flex justify-end gap-2 pr-0.5">
          <WinButton tone="focus">Calculate</WinButton>
          <WinButton>Close</WinButton>
        </div>
      </div>
    </div>
  );
}

export default function App() {
  return (
    <main className="grid min-h-screen grid-cols-[732fr_1312fr_510fr] bg-white font-[Roboto,sans-serif] text-[11px] text-black">
      <section className="relative h-[747px] min-w-0 overflow-hidden">
        <div className="-mt-[18px] h-[765px]">
          <RobotWindow inspector={<Inspector bold rows={SHORT_PROPERTIES} hot />} />
        </div>
        <UpdateDialog />
        <ContextMenu />
        <div className="absolute top-[692px] left-[170px] h-7 w-[141px] border-5 border-[#22b14c]" />
        <div className="absolute top-[528px] left-[417px] size-px bg-[#f00]" />
      </section>
      <section className="relative min-w-0 overflow-hidden pt-[3px]">
        <RobotWindow inspector={<Inspector done rows={PROPERTIES} />} surface={<Surface />} diagram={<Diagram />}>
          <ResultsPanel />
        </RobotWindow>
        <CalculationsDialog />
        <div className="absolute top-[322px] left-[515px] h-[41px] w-24 border-5 border-[#22b14c]" />
        <div className="absolute top-[476px] left-[45px] h-10 w-[203px] border-5 border-[#22b14c]" />
      </section>
    </main>
  );
}
